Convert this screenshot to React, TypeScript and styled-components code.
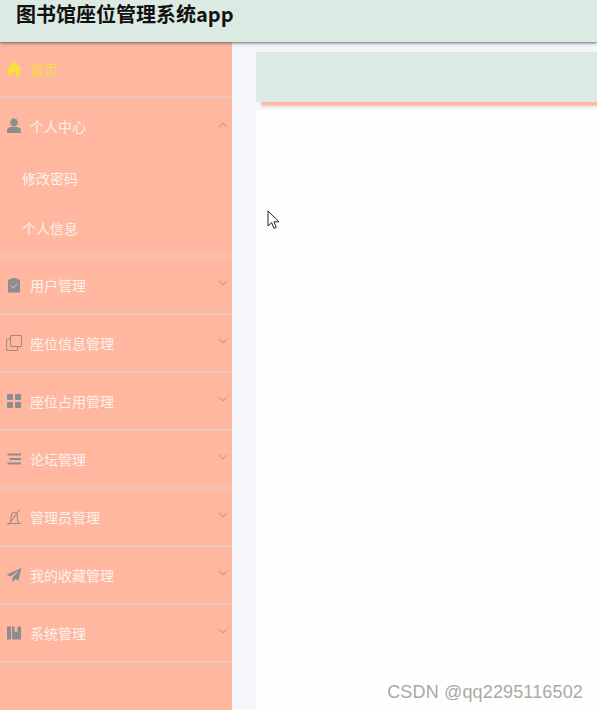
import React from "react";
import styled, { createGlobalStyle } from "styled-components";

const GlobalStyle = createGlobalStyle`
  html, body {
    margin: 0;
    padding: 0;
    height: 100%;
    overflow: hidden;
    background: #f4f6fb;
    font-family: "Noto Sans CJK SC", "Noto Sans", sans-serif;
  }
`;

const icons: Record<string, React.ReactNode> = {
  home: <path d="M8 .8 0 8.200h2.200V15h4v-4h3.600v4h4V8.200H16z" fill="currentColor" />,
  user: (
    <>
      <circle cx="8" cy="4.400" r="3.800" fill="currentColor" />
      <path d="M1 15v-2.600C1 10 3.400 8.800 8 8.800s7 1.200 7 3.600V15z" fill="currentColor" />
    </>
  ),
  clip: (
    <>
      <path d="M2 2.400h3V1h6v1.400h3V15.500H2z" fill="currentColor" />
      <path d="m5 8.600 2.200 2.200L11 7" fill="none" stroke="#c9b3b0" strokeWidth="1.200" />
    </>
  ),
  copy: (
    <>
      <rect x="4.500" y=".5" width="11" height="11" rx="1" fill="none" stroke="currentColor" strokeWidth="1.100" />
      <path d="M4.500 4H1.300a.8.8 0 0 0-.8.8v9.900c0 .4.4.8.8.8h9.400c.5 0 .8-.4.8-.8v-3.200" fill="none" stroke="currentColor" strokeWidth="1.100" />
    </>
  ),
  grid: (
    <>
      <rect x="1" y="1" width="6" height="6" rx="1" fill="currentColor" />
      <rect x="9" y="1" width="6" height="6" rx="1" fill="currentColor" />
      <rect x="1" y="9" width="6" height="6" rx="1" fill="currentColor" />
      <rect x="9" y="9" width="6" height="6" rx="1" fill="currentColor" />
    </>
  ),
  list: (
    <>
      <path d="M1.500 2.500H15v2H1.500zM1.500 11.500H15v2H1.500z" fill="currentColor" />
      <path d="M3.500 7H15v2H3.500z" fill="currentColor" />
    </>
  ),
  bell: (
    <path d="M1 14.500h14M3.500 14.500c1.500-2 1.500-4 1.700-6.400C5.400 5.400 6.500 3.500 8.200 3.500c2 0 3 1.700 3 4.400 0 2.700.4 4.800 1.600 6.600M2.500 15.500 13.500 1" fill="none" stroke="currentColor" strokeWidth="1.100" />
  ),
  plane: <path d="M15.500 1 .5 7.500l4 2L13 3.500 6.500 10.500v5l2.700-3.500 3.300 1.600z" fill="currentColor" />,
  book: (
    <path d="M1 1.500h4v13H1zM6 1.500h2.500v6l1.500-1.200 1.500 1.200v-6H15v13H6z" fill="currentColor" />
  ),
};

const menu = [
  { key: "user", label: "个人中心", open: true, children: ["修改密码", "个人信息"] },
  { key: "clip", label: "用户管理" },
  { key: "copy", label: "座位信息管理", light: true },
  { key: "grid", label: "座位占用管理" },
  { key: "list", label: "论坛管理" },
  { key: "bell", label: "管理员管理", light: true },
  { key: "plane", label: "我的收藏管理" },
  { key: "book", label: "系统管理" },
];

export default function App() {
  return (
    <Page>
      <GlobalStyle />
      <Header>
        <Title>图书馆座位管理系统app</Title>
      </Header>
      <Body>
        <Sidebar>
          <HomeItem>
            <IconBox viewBox="0 0 16 16" $home>{icons.home}</IconBox>
            <HomeLabel>首页</HomeLabel>
          </HomeItem>
          {menu.map((item) => (
            <MenuItem key={item.key}>
              <MenuRow>
                <IconBox viewBox="0 0 16 16" $light={item.light}>{icons[item.key]}</IconBox>
                <Label>{item.label}</Label>
                <Arrow viewBox="0 0 10 6" $open={item.open}>
                  <path d="M.8.8 5 5 9.200.8" fill="none" stroke="currentColor" strokeWidth="1.100" />
                </Arrow>
              </MenuRow>
              {item.children?.map((sub) => <SubRow key={sub}>{sub}</SubRow>)}
            </MenuItem>
          ))}
        </Sidebar>
        <Main>
          <Banner />
          <Content />
        </Main>
      </Body>
      <Cursor viewBox="0 0 13 20">
        <path d="M1 1v15l3.600-3.400 2.400 5.800 2.300-1-2.400-5.600H12z" fill="#fff" stroke="#222" strokeWidth="1" />
      </Cursor>
      <Watermark>CSDN @qq2295116502</Watermark>
    </Page>
  );
}

const Page = styled.div`
  position: relative;
  width: 597px;
  height: 710px;
  overflow: hidden;
  display: flex;
  flex-direction: column;
`;

const Header = styled.header`
  position: relative;
  z-index: 2;
  height: 42px;
  flex-shrink: 0;
  padding-left: 16px;
  background: #dceae4;
  box-shadow: 0 1px 3px rgba(60, 70, 65, 0.8);
`;

const Title = styled.h1`
  margin: 0;
  font-size: 20px;
  line-height: 27px;
  font-weight: 700;
  color: #111;
`;

const Body = styled.div`
  flex: 1;
  display: flex;
  min-height: 0;
`;

const Sidebar = styled.nav`
  width: 232px;
  flex-shrink: 0;
  background: #ffb7a0;
`;

const MenuItem = styled.div`
  border-bottom: 2px solid #ecc6ba;
`;

const MenuRow = styled.div`
  box-sizing: border-box;
  height: 56px;
  display: flex;
  align-items: center;
  padding: 0 4px 0 6px;
`;

const HomeItem = styled(MenuItem)`
  box-sizing: border-box;
  height: 56px;
  display: flex;
  align-items: center;
  padding: 0 4px 0 6px;
`;

const IconBox = styled.svg<{ $home?: boolean; $light?: boolean }>`
  width: 16px;
  height: 16px;
  flex-shrink: 0;
  margin-right: 8px;
  color: ${(p) => (p.$home ? "#f7e13c" : p.$light ? "#a58a84" : "#8d8d90")};
`;

const Label = styled.span`
  flex: 1;
  font-size: 14px;
  line-height: 20px;
  color: #fdf1ec;
`;

const HomeLabel = styled(Label)`
  color: #f7de3d;
`;

const Arrow = styled.svg<{ $open?: boolean }>`
  width: 10px;
  height: 6px;
  margin-bottom: ${(p) => (p.$open ? "3px" : "5px")};
  color: #e9927f;
  transform: ${(p) => (p.$open ? "rotate(180deg)" : "none")};
`;

const SubRow = styled.div`
  box-sizing: border-box;
  height: 50px;
  padding: 0 0 2px 22px;
  display: flex;
  align-items: center;
  font-size: 14px;
  color: #fdf1ec;

  &:last-child {
    height: 51px;
    padding-bottom: 3px;
  }
`;

const Main = styled.main`
  flex: 1;
  min-width: 0;
  padding: 10px 0 0 24px;
  display: flex;
  flex-direction: column;
  background: #f4f6fb;
`;

const Banner = styled.div`
  height: 50px;
  flex-shrink: 0;
  background: #dceae4;
  box-shadow: 4px 4px 2px -0.5px #ffb7a0;
`;

const Content = styled.div`
  flex: 1;
  margin-top: 8px;
  background: #fffefc;
`;

const Cursor = styled.svg`
  position: absolute;
  left: 267px;
  top: 210px;
  width: 13px;
  height: 20px;
`;

const Watermark = styled.div`
  position: absolute;
  right: 14px;
  top: 682px;
  font-family: "Liberation Sans", sans-serif;
  font-size: 18px;
  line-height: 20px;
  letter-spacing: 0.15px;
  color: #a9a9a9;
`;
